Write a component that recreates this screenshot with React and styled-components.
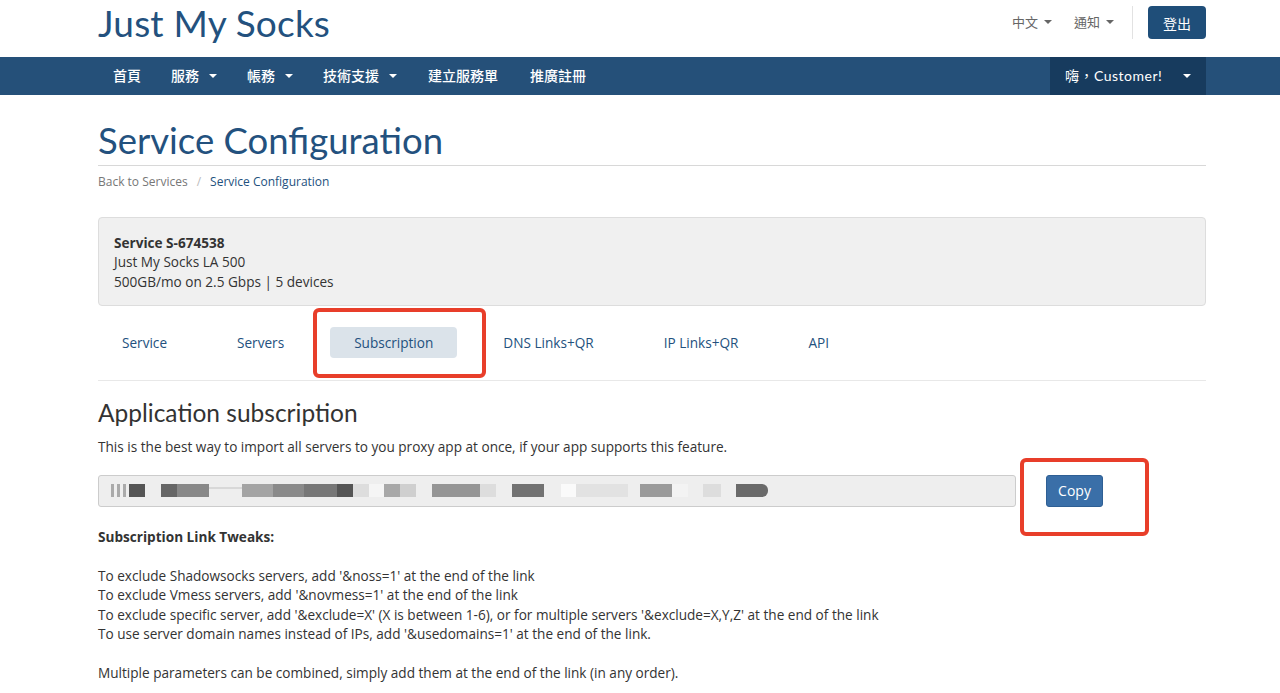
import React from 'react';
import styled, { createGlobalStyle } from 'styled-components';

const GlobalStyle = createGlobalStyle`
    body {
        margin: 0;
        background: #fff;
        color: #333;
        font-family: "Open Sans", "Noto Sans CJK TC", sans-serif;
        font-size: 13.6px;
        line-height: 1.4;
    }
    * { box-sizing: border-box; }
`;

const Container = styled.div`
    width: 1108px;
    margin: 0 0 0 98px;
`;

const TopBar = styled.header`
    height: 57px;
`;

const TopInner = styled(Container)`
    height: 100%;
    display: flex;
    align-items: flex-start;
    justify-content: space-between;
`;

const Logo = styled.a`
    font-family: "Lato", sans-serif;
    font-size: 37px;
    line-height: 46px;
    color: #23517e;
    text-decoration: none;
    letter-spacing: 0.2px;
`;

const TopRight = styled.div`
    display: flex;
    align-items: center;
    height: 44px;
`;

const TopLink = styled.span`
    display: flex;
    align-items: center;
    gap: 6px;
    color: #666;
    font-family: "Noto Sans CJK TC", sans-serif;
    font-size: 13px;
    margin-left: 22px;
`;

const Caret = styled.span`
    display: inline-block;
    flex: none;
    width: 0;
    height: 0;
    border-left: 4px solid transparent;
    border-right: 4px solid transparent;
    border-top: 4px solid ${(p) => p.$color || '#666'};
`;

const Divider = styled.span`
    width: 1px;
    height: 33px;
    background: #e2e2e2;
    margin: 0 15px 0 18px;
`;

const LogoutButton = styled.button`
    background: #1f4e79;
    color: #fff;
    border: none;
    border-radius: 4px;
    width: 58px;
    height: 33px;
    font-family: "Noto Sans CJK TC", sans-serif;
    font-size: 14px;
    margin-top: 1px;
`;

const NavBar = styled.nav`
    background: #255079;
    height: 38px;
`;

const NavInner = styled(Container)`
    display: flex;
    height: 100%;
    justify-content: space-between;
`;

const NavList = styled.ul`
    display: flex;
    list-style: none;
    margin: 0;
    padding: 0;
`;

const NavItem = styled.li`
    display: flex;
    align-items: center;
    gap: 10px;
    padding: 0 15px;
    color: #fff;
    font-family: "Noto Sans CJK TC", sans-serif;
    font-size: 14px;
    font-weight: 500;
    &:nth-child(n + 5) {
        padding: 0 16px;
    }
`;

const UserMenu = styled.div`
    display: flex;
    align-items: center;
    justify-content: space-between;
    background: #173b5e;
    padding: 0 15px;
    width: 156px;
    color: #fff;
    font-size: 14px;
    font-family: "Lato", "Noto Sans CJK TC", sans-serif;
    letter-spacing: 0.5px;
    white-space: nowrap;
`;

const PageHeader = styled.div`
    margin-top: 23px;
    padding-bottom: 2px;
    border-bottom: 1px solid #d8d8d8;
`;

const Title = styled.h1`
    margin: 0;
    font-family: "Lato", sans-serif;
    font-weight: 400;
    font-size: 36.5px;
    line-height: 45px;
    color: #23517e;
`;

const Breadcrumb = styled.div`
    display: flex;
    gap: 9px;
    font-size: 12px;
    margin-top: 8px;
    color: #777;
`;

const Sep = styled.span`
    color: #bbb;
`;

const Active = styled.span`
    color: #23517e;
`;

const InfoBox = styled.div`
    margin-top: 26px;
    background: #f0f0f0;
    border: 1px solid #ddd;
    border-radius: 4px;
    padding: 15px 15px 14px;
    line-height: 19.5px;
`;

const Strong = styled.div`
    font-weight: 700;
`;

const Tabs = styled.ul`
    display: flex;
    list-style: none;
    margin: 21px 0 0;
    padding: 0 0 22px;
    gap: 22px;
    border-bottom: 1px solid #e8e8e8;
`;

const Tab = styled.li`
    position: relative;
    padding: 0 24px;
    height: 31px;
    line-height: 31px;
    border-radius: 4px;
    color: #23517e;
    background: ${(p) => (p.$active ? '#dbe3ea' : 'transparent')};
`;

const Highlight = styled.span`
    position: absolute;
    top: ${(p) => p.$t}px;
    left: ${(p) => p.$l}px;
    right: ${(p) => p.$r}px;
    bottom: ${(p) => p.$b}px;
    border: 4px solid #e83e2a;
    border-radius: 6px;
    pointer-events: none;
`;

const SectionTitle = styled.h3`
    margin: 17px 0 0;
    font-family: "Lato", sans-serif;
    font-weight: 400;
    font-size: 24.5px;
    line-height: 30px;
    color: #333;
`;

const Para = styled.p`
    margin: ${(p) => p.$m || '0'};
    line-height: 19.5px;
`;

const LinkRow = styled.div`
    display: flex;
    align-items: center;
    gap: 30px;
    margin-top: 18px;
`;

const FakeInput = styled.div`
    width: 918px;
    height: 32px;
    background: #eee;
    border: 1px solid #ccc;
    border-radius: 3px;
    display: flex;
    align-items: center;
    padding-left: 12px;
    overflow: hidden;
`;

const Blur = styled.span`
    flex: none;
    width: ${(p) => p.$w}px;
    height: ${(p) => (p.$thin ? 2 : 13)}px;
    margin-left: ${(p) => p.$gap || 0}px;
    margin-top: ${(p) => (p.$thin ? -6 : 0)}px;
    background: ${(p) => p.$c};
    border-radius: ${(p) => (p.$round ? '0 6px 6px 0' : '0')};
`;

const CopyWrap = styled.div`
    position: relative;
`;

const CopyButton = styled.button`
    width: 57px;
    height: 32px;
    border: 1px solid #2e5f94;
    border-radius: 3px;
    background: #3a6fa8;
    color: #fff;
    font-family: "Open Sans", sans-serif;
    font-size: 14px;
`;

const Tweaks = styled.div`
    margin-top: 20px;
    line-height: 19.5px;
`;

const blocks = [
    { w: 3, c: '#aaa', gap: 0 },
    { w: 3, c: '#aaa', gap: 3 },
    { w: 3, c: '#aaa', gap: 3 },
    { w: 16, c: '#555', gap: 3 },
    { w: 16, c: '#666', gap: 16 },
    { w: 32, c: '#888' },
    { w: 33, c: '#d8d8d8', thin: true },
    { w: 31, c: '#a4a4a4' },
    { w: 31, c: '#8a8a8a' },
    { w: 33, c: '#777' },
    { w: 16, c: '#555' },
    { w: 16, c: '#ddd' },
    { w: 15, c: '#f5f5f5' },
    { w: 16, c: '#a8a8a8' },
    { w: 16, c: '#cfcfcf' },
    { w: 48, c: '#959595', gap: 16 },
    { w: 16, c: '#ddd' },
    { w: 32, c: '#727272', gap: 16 },
    { w: 15, c: '#fafafa', gap: 17 },
    { w: 52, c: '#e2e2e2' },
    { w: 32, c: '#9a9a9a', gap: 12 },
    { w: 16, c: '#f3f3f3' },
    { w: 18, c: '#ddd', gap: 15 },
    { w: 32, c: '#6a6a6a', gap: 15, round: true },
];

const navItems = [
    { label: '首頁' },
    { label: '服務', caret: true },
    { label: '帳務', caret: true },
    { label: '技術支援', caret: true },
    { label: '建立服務單' },
    { label: '推廣註冊' },
];

const tabs = ['Service', 'Servers', 'Subscription', 'DNS Links+QR', 'IP Links+QR', 'API'];

const App = () => {
    return (
        <>
            <GlobalStyle />
            <TopBar>
                <TopInner>
                    <Logo>Just My Socks</Logo>
                    <TopRight>
                        <TopLink>
                            中文 <Caret />
                        </TopLink>
                        <TopLink>
                            通知 <Caret />
                        </TopLink>
                        <Divider />
                        <LogoutButton>登出</LogoutButton>
                    </TopRight>
                </TopInner>
            </TopBar>
            <NavBar>
                <NavInner>
                    <NavList>
                        {navItems.map((item) => (
                            <NavItem key={item.label}>
                                {item.label}
                                {item.caret && <Caret $color='#fff' />}
                            </NavItem>
                        ))}
                    </NavList>
                    <UserMenu>
                        <span>嗨，Customer!</span>
                        <Caret $color='#fff' />
                    </UserMenu>
                </NavInner>
            </NavBar>
            <Container>
                <PageHeader>
                    <Title>Service Configuration</Title>
                </PageHeader>
                <Breadcrumb>
                    <span>Back to Services</span>
                    <Sep>/</Sep>
                    <Active>Service Configuration</Active>
                </Breadcrumb>
                <InfoBox>
                    <Strong>Service S-674538</Strong>
                    <div>Just My Socks LA 500</div>
                    <div>500GB/mo on 2.5 Gbps | 5 devices</div>
                </InfoBox>
                <Tabs>
                    {tabs.map((t) => (
                        <Tab key={t} $active={t === 'Subscription'}>
                            {t}
                            {t === 'Subscription' && (
                                <Highlight $t={-19} $l={-17} $r={-29} $b={-20} />
                            )}
                        </Tab>
                    ))}
                </Tabs>
                <SectionTitle>Application subscription</SectionTitle>
                <Para $m='9px 0 0'>
                    This is the best way to import all servers to you proxy app at once, if your app supports this feature.
                </Para>
                <LinkRow>
                    <FakeInput>
                        {blocks.map((b, i) => (
                            <Blur
                                key={i}
                                $w={b.w}
                                $c={b.c}
                                $gap={b.gap}
                                $thin={b.thin}
                                $round={b.round}
                            />
                        ))}
                    </FakeInput>
                    <CopyWrap>
                        <CopyButton>Copy</CopyButton>
                        <Highlight $t={-17} $l={-26} $r={-46} $b={-29} />
                    </CopyWrap>
                </LinkRow>
                <Tweaks>
                    <Strong>Subscription Link Tweaks:</Strong>
                    <br />
                    <div>To exclude Shadowsocks servers, add '&amp;noss=1' at the end of the link</div>
                    <div>To exclude Vmess servers, add '&amp;novmess=1' at the end of the link</div>
                    <div>
                        To exclude specific server, add '&amp;exclude=X' (X is between 1-6), or for multiple servers '&amp;exclude=X,Y,Z' at the end of the link
                    </div>
                    <div>To use server domain names instead of IPs, add '&amp;usedomains=1' at the end of the link.</div>
                    <br />
                    <div>Multiple parameters can be combined, simply add them at the end of the link (in any order).</div>
                </Tweaks>
            </Container>
        </>
    );
};

export default App;
